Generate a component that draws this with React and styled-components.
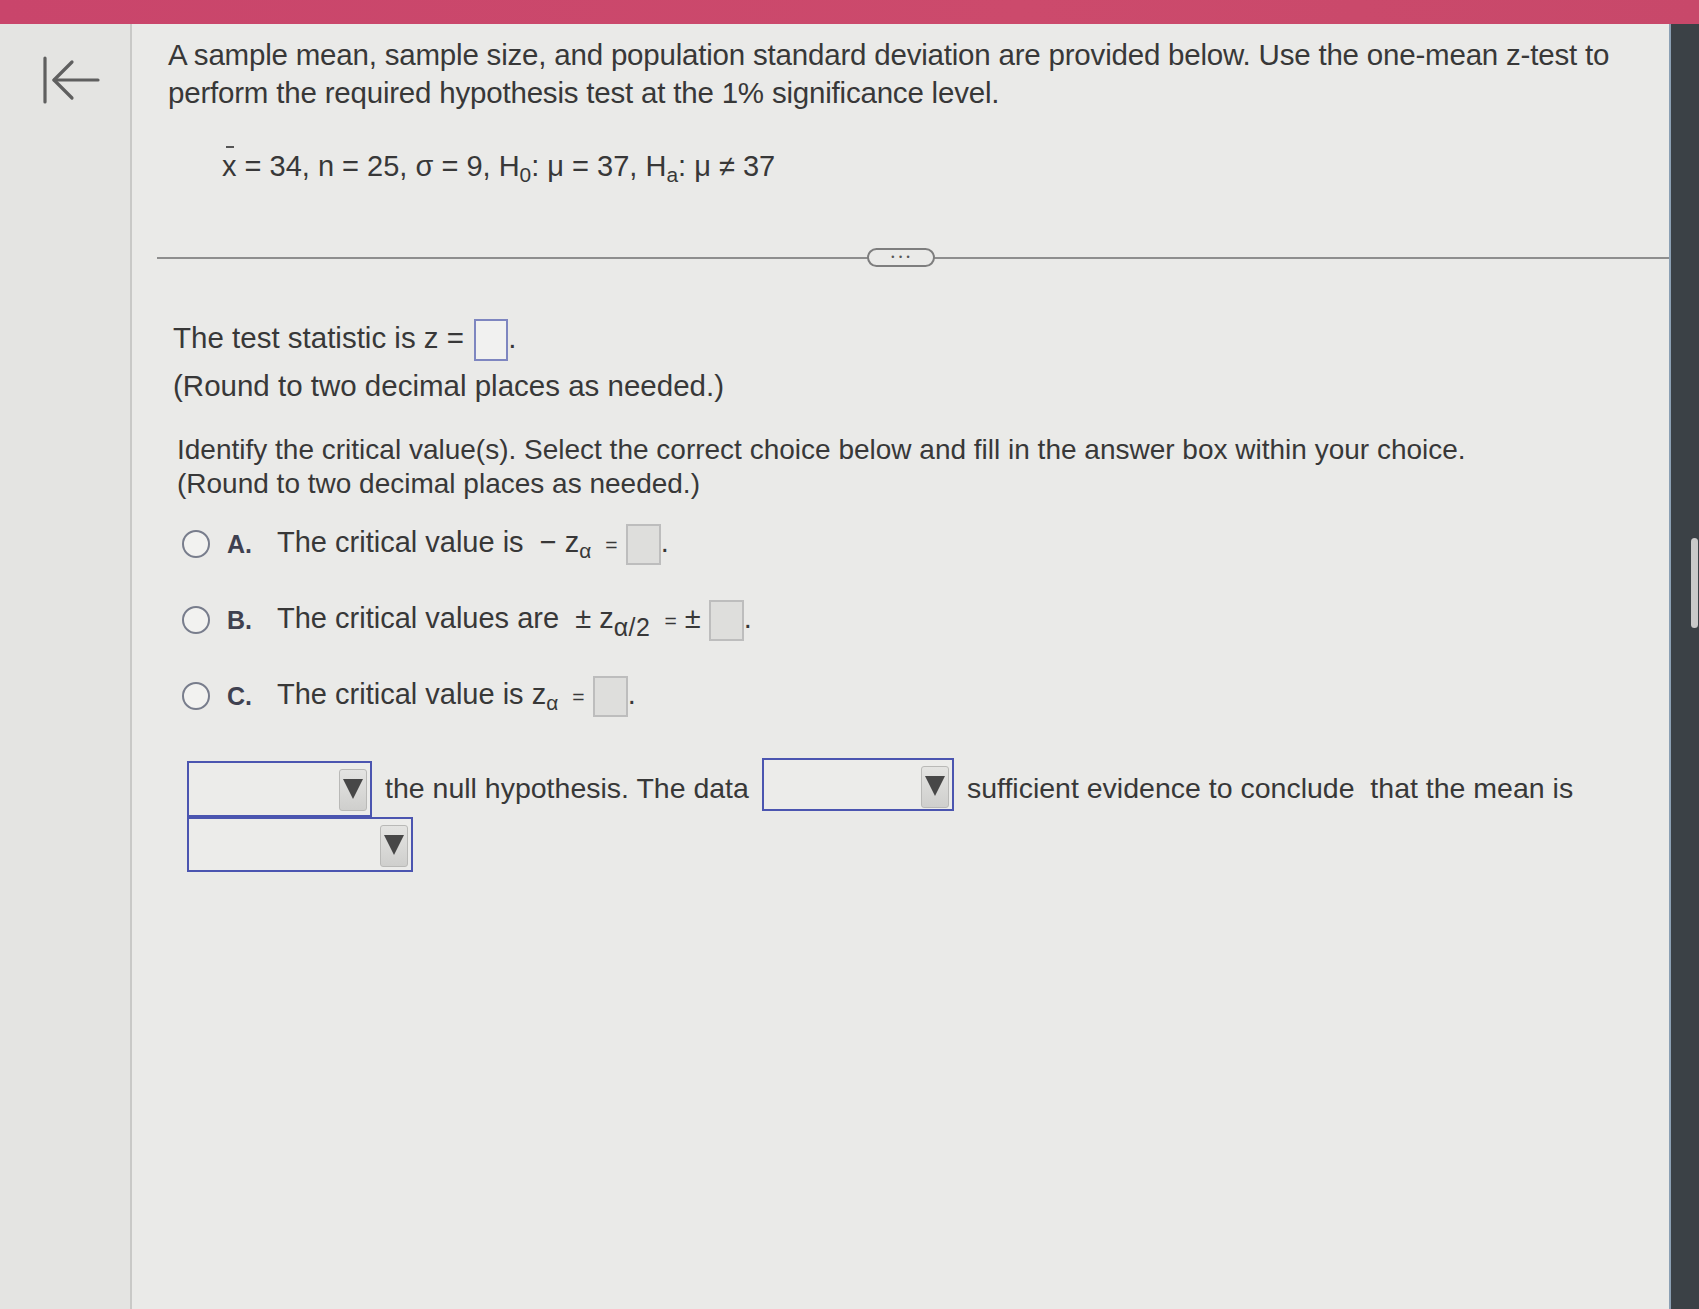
import React from 'react';
import styled, { createGlobalStyle } from 'styled-components';

export default function App() {
    return (
        <>
            <GlobalStyle />
            <Page>
                <TopBar />
                <Body>
                    <Sidebar>
                        <BackButton aria-label="back">
                            <svg width="58" height="48" viewBox="0 0 58 48" fill="none" stroke="#5f5f5f" strokeWidth="3.2" strokeLinecap="round" strokeLinejoin="round">
                                <line x1="3" y1="2" x2="3" y2="46" />
                                <line x1="12" y1="24" x2="56" y2="24" />
                                <polyline points="30,6 12,24 30,42" />
                            </svg>
                        </BackButton>
                    </Sidebar>

                    <Main>
                        <Prompt>
                            A sample mean, sample size, and population standard deviation are provided below. Use the one-mean z-test to<br />
                            perform the required hypothesis test at the 1% significance level.
                        </Prompt>
                        <Formula>
                            <Bar>x</Bar> = 34, n = 25, σ = 9, H<sub>0</sub>: μ = 37, H<sub>a</sub>: μ ≠ 37
                        </Formula>

                        <Divider>
                            <More>• • •</More>
                        </Divider>

                        <Question>
                            <Line>
                                The test statistic is z = <AnswerBox />.
                            </Line>
                            <Line>(Round to two decimal places as needed.)</Line>
                        </Question>

                        <Question $indent={4} $top={26} $size={28} $spacing={-4}>
                            <Line>Identify the critical value(s). Select the correct choice below and fill in the answer box within your choice.</Line>
                            <Line>(Round to two decimal places as needed.)</Line>
                        </Question>

                        <Choices>
                            <Choice>
                                <Radio />
                                <Letter>A.</Letter>
                                <ChoiceText>
                                    The critical value is &nbsp;− z<sub>α</sub> <Small>=</Small> <ChoiceBox />.
                                </ChoiceText>
                            </Choice>
                            <Choice>
                                <Radio />
                                <Letter>B.</Letter>
                                <ChoiceText>
                                    The critical values are &nbsp;± z<Wide>α/2</Wide> <Small>=</Small> ± <ChoiceBox />.
                                </ChoiceText>
                            </Choice>
                            <Choice>
                                <Radio />
                                <Letter>C.</Letter>
                                <ChoiceText>
                                    The critical value is z<sub>α</sub> <Small>=</Small> <ChoiceBox />.
                                </ChoiceText>
                            </Choice>
                        </Choices>

                        <Conclusion>
                            <Dropdown $w={185} $h={56} />
                            <Phrase>the null hypothesis. The data</Phrase>
                            <Dropdown $w={192} $h={53} $gap />
                            <Phrase>sufficient evidence to conclude&nbsp; that the mean is</Phrase>
                            <Dropdown $w={226} $h={55} />
                        </Conclusion>
                    </Main>

                    <Bezel>
                        <Thumb />
                    </Bezel>
                </Body>
            </Page>
        </>
    );
}

function Dropdown({ $w, $h, $gap }) {
    return (
        <Select $w={$w} $h={$h} $gap={$gap}>
            <ArrowButton>
                <Triangle />
            </ArrowButton>
        </Select>
    );
}

/* --- STYLES --- */
const GlobalStyle = createGlobalStyle`
    html, body {
        margin: 0;
        padding: 0;
        background: #e8e8e6;
    }
    * {
        box-sizing: border-box;
    }
`;
const Page = styled.div`
    display: grid;
    grid-template-rows: 24px 1fr;
    min-height: 100vh;
    font-family: "Liberation Sans", Arial, sans-serif;
    color: #383838;
`;
const TopBar = styled.div`
    background: linear-gradient(90deg, #c9456b 0%, #cc4a6c 60%, #c8486a 100%);
`;
const Body = styled.div`
    display: grid;
    grid-template-columns: 132px 1fr 30px;
`;
const Sidebar = styled.div`
    background: #e4e4e2;
    border-right: 2px solid #c9c9c7;
    padding: 32px 0 0 42px;
`;
const BackButton = styled.div`
    width: 58px;
    height: 48px;
`;
const Main = styled.div`
    background: #eaeae8;
    padding: 12px 0 0 36px;
    sub {
        font-size: 0.72em;
        vertical-align: -0.3em;
        line-height: 0;
    }
`;
const Prompt = styled.div`
    font-size: 29.5px;
    line-height: 38px;
    letter-spacing: -0.2px;
    white-space: nowrap;
`;
const Formula = styled.div`
    font-size: 29px;
    margin: 38px 0 0 54px;
    white-space: nowrap;
`;
const Bar = styled.span`
    position: relative;
    &::before {
        content: '';
        position: absolute;
        left: 4px;
        top: -4px;
        width: 8px;
        height: 2px;
        background: #555;
    }
`;
const Divider = styled.div`
    position: relative;
    margin: 74px 0 0 -11px;
    height: 2px;
    background: #8e8e8e;
`;
const More = styled.div`
    position: absolute;
    left: 710px;
    top: -9px;
    width: 68px;
    height: 19px;
    border: 2px solid #7e7e7e;
    border-radius: 10px;
    background: #eaeae8;
    font-size: 9px;
    line-height: 14px;
    text-align: center;
    color: #555;
    letter-spacing: 1px;
`;
const Question = styled.div`
    margin: ${p => (p.$top ?? 60)}px 0 0 ${p => 5 + (p.$indent ?? 0)}px;
    font-size: ${p => p.$size ?? 29.5}px;
    & > div + div {
        margin-top: ${p => p.$spacing ?? 6}px;
    }
`;
const Line = styled.div`
    line-height: 38px;
    white-space: nowrap;
`;
const AnswerBox = styled.span`
    display: inline-block;
    width: 34px;
    height: 42px;
    border: 2px solid #7e86c0;
    background: #f1f1f0;
    vertical-align: middle;
    margin-left: 2px;
`;
const Choices = styled.div`
    display: flex;
    flex-direction: column;
    gap: 34px;
    margin: 20px 0 0 14px;
`;
const Choice = styled.div`
    display: flex;
    align-items: center;
    height: 42px;
    font-size: 29px;
`;
const Radio = styled.span`
    width: 28px;
    height: 28px;
    border: 2.5px solid #787d8c;
    border-radius: 50%;
    background: #f2f2f0;
    flex: none;
`;
const Letter = styled.span`
    font-weight: bold;
    font-size: 25px;
    margin-left: 17px;
    width: 50px;
    color: #3f4150;
`;
const ChoiceText = styled.span`
    white-space: nowrap;
`;
const Wide = styled.sub`
    && {
        font-size: 0.86em;
        letter-spacing: 0.5px;
    }
`;
const Small = styled.span`
    font-size: 21px;
    margin-left: 6px;
`;
const ChoiceBox = styled.span`
    display: inline-block;
    width: 35px;
    height: 41px;
    border: 2px solid #bdbdbd;
    background: #dededc;
    vertical-align: middle;
`;
const Conclusion = styled.div`
    display: flex;
    flex-wrap: wrap;
    align-items: flex-start;
    margin: 44px 30px 0 19px;
`;
const Phrase = styled.span`
    font-size: 28.5px;
    line-height: 54px;
    margin: 0 13px 0 13px;
    white-space: nowrap;
`;
const Select = styled.div`
    width: ${p => p.$w}px;
    height: ${p => p.$h}px;
    border: 2px solid #4b55b0;
    background: #ececea;
    display: flex;
    justify-content: flex-end;
    align-items: flex-start;
    padding: 6px 3px 0 0;
    margin-top: ${p => (p.$gap ? '-3px' : '0')};
`;
const ArrowButton = styled.span`
    width: 28px;
    height: 42px;
    border-radius: 3px;
    background: linear-gradient(180deg, #e4e4e2 0%, #cfcfcd 100%);
    border: 1px solid #b9b9b7;
    display: flex;
    justify-content: center;
    padding-top: 9px;
`;
const Triangle = styled.span`
    width: 0;
    height: 0;
    border-left: 10px solid transparent;
    border-right: 10px solid transparent;
    border-top: 20px solid #474747;
`;
const Bezel = styled.div`
    background: #3b4146;
    border-left: 2px solid #8ba0b4;
    padding: 514px 2px 0 20px;
`;
const Thumb = styled.div`
    width: 7px;
    height: 90px;
    border-radius: 4px;
    background: #c9c9c9;
`;
